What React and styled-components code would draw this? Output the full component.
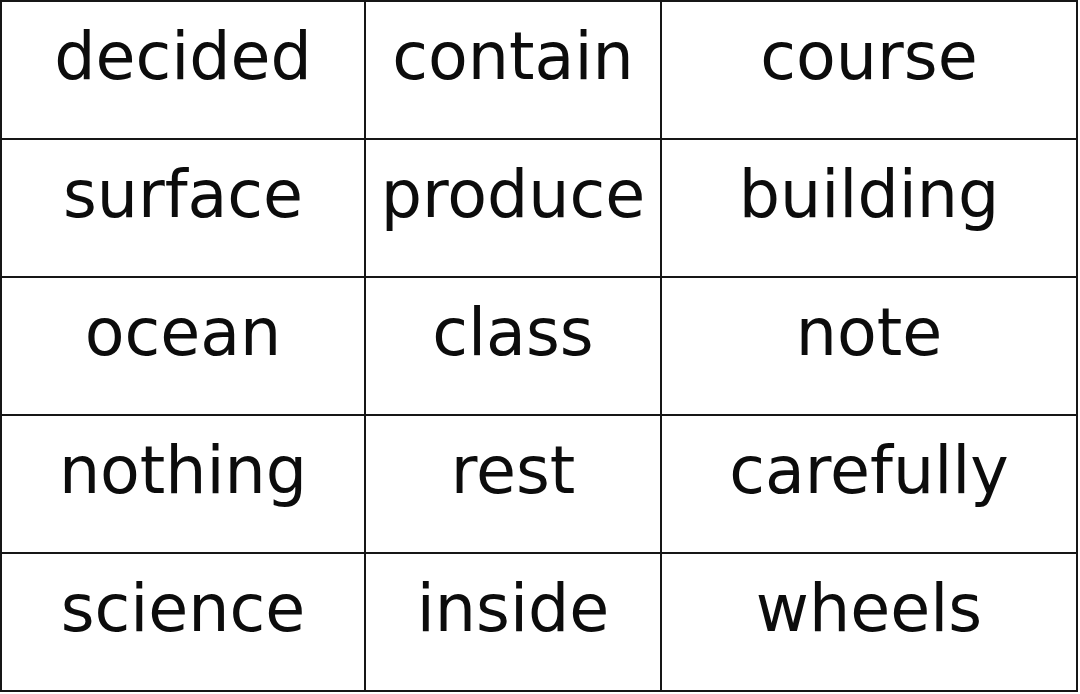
import React from 'react';
import styled, { createGlobalStyle } from 'styled-components';

// word cards, 3 across
const words = [
  ['decided', 'contain', 'course'],
  ['surface', 'produce', 'building'],
  ['ocean', 'class', 'note'],
  ['nothing', 'rest', 'carefully'],
  ['science', 'inside', 'wheels'],
];

const GlobalStyle = createGlobalStyle`
  html, body {
    margin: 0;
    padding: 0;
    background: #fff;
  }
  body {
    font-family: "DejaVu Sans", "Liberation Sans", sans-serif;
    overflow: hidden;
  }
`;

const Sheet = styled.div`
  width: 1080px;
  height: 694px;
  background: #fff;
`;

const Grid = styled.div`
  display: grid;
  grid-template-columns: 362px 294px 414px;
  grid-auto-rows: 136px;
  gap: 2px;
  padding: 2px;
  width: 1078px;
  box-sizing: border-box;
  background: #161616;
`;

const Cell = styled.div`
  display: flex;
  align-items: center;
  justify-content: center;
  background: #fff;
  padding-bottom: 28px;
  box-sizing: border-box;
  font-size: 65px;
  color: #0c0c0c;
  white-space: nowrap;
`;

function App() {
  return (
    <Sheet>
      <GlobalStyle />
      <Grid>
        {words.map((row, r) =>
          row.map((word, c) => <Cell key={r + '-' + c}>{word}</Cell>)
        )}
      </Grid>
    </Sheet>
  );
}

export default App;
